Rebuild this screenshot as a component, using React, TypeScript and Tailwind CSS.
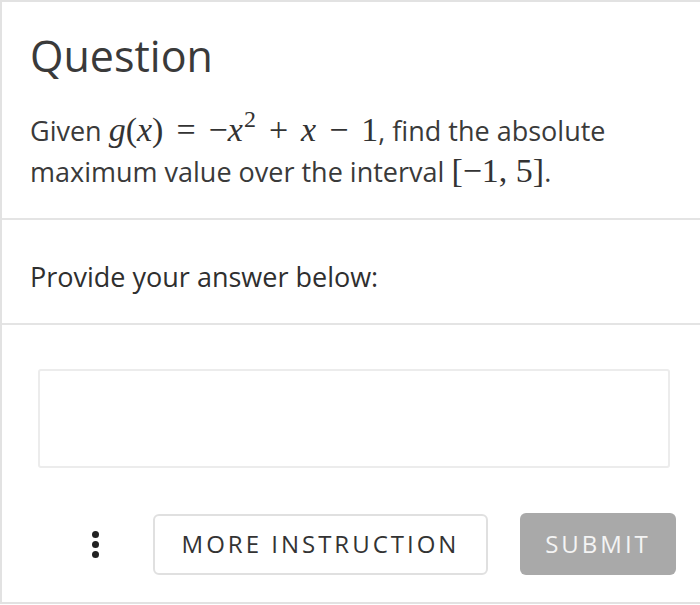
import React from 'react';

const serif = { fontFamily: '"Liberation Serif", "Times New Roman", serif' };

const Op = ({ children }: { children: React.ReactNode }) => (
  <span className="inline-block mx-[13px]">{children}</span>
);

const Math = ({ children }: { children: React.ReactNode }) => (
  <span className="text-[34px] leading-[30px] text-[#333]" style={serif}>
    {children}
  </span>
);

export default function App() {
  return (
    <div className="w-[700px] h-[605px] bg-white" style={{ fontFamily: '"Open Sans", sans-serif' }}>
      <div className="h-[604px] border-l-2 border-t-2 border-b-2 border-[#e2e2e2] flex flex-col text-[#333]">
        {/* Question */}
        <div className="h-[216px] pl-[28px] pt-[26px]">
          <h1 className="text-[43px] leading-[56px] text-[#3a3a3a]">Question</h1>
          <p className="mt-[26px] text-[27px] leading-[41px] text-[#3a3a3a]">
            Given{' '}
            <Math>
              <i>g</i>(<i>x</i>)<Op>=</Op>−<i>x</i>
              <sup className="text-[24px] relative -top-[14px] ml-[1px]">2</sup>
              <Op>+</Op>
              <i>x</i>
              <Op>−</Op>1
            </Math>
            , find the absolute
            <br />
            maximum value over the interval{' '}
            <Math>[−1,&nbsp;5]</Math>.
          </p>
        </div>

        <div className="h-[2px] bg-[#e4e4e4]" />

        {/* Prompt */}
        <div className="h-[103px] pl-[28px] flex items-center pt-[12px]">
          <span className="text-[27px] text-[#2f2f2f]">Provide your answer below:</span>
        </div>

        <div className="h-[2px] bg-[#e4e4e4]" />

        {/* Answer */}
        <div className="flex-1 flex flex-col">
          <div className="mt-[44px] ml-[36px] w-[632px] h-[99px] border-2 border-[#ececec] rounded-[3px]" />

          <div className="mt-[45px] flex items-center">
            <button className="ml-[80px] w-[26px] h-[30px] flex flex-col items-center justify-center gap-[3px]">
              <span className="w-[7px] h-[7px] rounded-full bg-[#222]" />
              <span className="w-[7px] h-[7px] rounded-full bg-[#222]" />
              <span className="w-[7px] h-[7px] rounded-full bg-[#222]" />
            </button>
            <button className="ml-[45px] w-[335px] h-[61px] border-2 border-[#e0e0e0] rounded-[6px] bg-white text-[24px] tracking-[3px] text-[#333]">
              MORE INSTRUCTION
            </button>
            <button className="ml-[32px] w-[156px] h-[62px] rounded-[6px] bg-[#a9a9a9] text-[24px] tracking-[3px] text-[#f4f4f4]">
              SUBMIT
            </button>
          </div>
        </div>
      </div>
    </div>
  );
}
